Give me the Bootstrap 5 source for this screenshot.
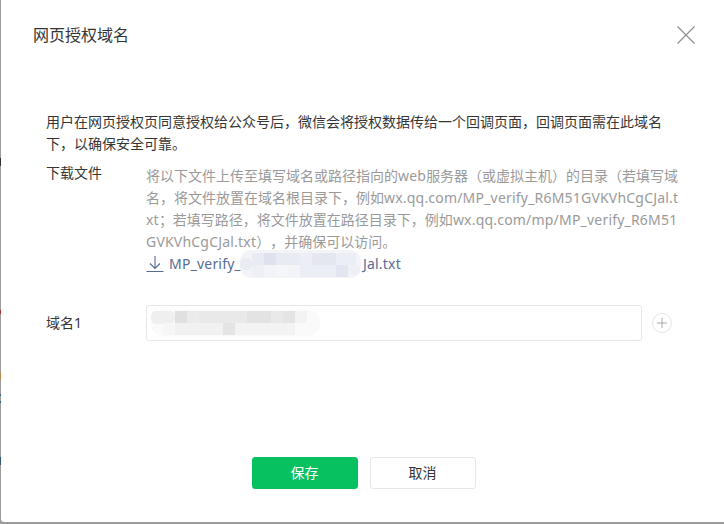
<!DOCTYPE html>
<html lang="zh-CN">
<head>
<meta charset="utf-8">
<title>网页授权域名</title>
<link href="https://cdn.jsdelivr.net/npm/bootstrap@5.3.0/dist/css/bootstrap.min.css" rel="stylesheet">
<style>
html,body{height:524px;overflow:hidden}
body{font-family:"Noto Sans","Noto Sans CJK SC",sans-serif;font-size:14px;line-height:22px;color:#353535;font-kerning:none;text-spacing-trim:space-all;font-feature-settings:"chws" 0,"halt" 0,"palt" 0;
 background:linear-gradient(#9b9b9b 0 158px,#333 158px 166px,#9b9b9b 166px 310px,#a33 310px 314px,#9b9b9b 314px 372px,#b98a4a 372px 380px,#9b9b9b 380px 394px,#36609e 394px 396px,#9b9b9b 396px 401px,#36609e 401px 403px,#9b9b9b 403px 457px,#357 457px 465px,#9b9b9b 465px)}
.dlg{height:522px;margin-left:1px;background:#fff;border-bottom-left-radius:3px}
.dlg-title{padding:24px 29px 0 32px;height:101px}
.dlg-title h1{font-size:16px;line-height:22px;font-weight:400;margin:0;color:#353535}
.dlg-close{width:18px;height:18px;margin-top:2px;padding:0;border:0;background:none;display:block}
.dlg-close svg{display:block}
.dlg-body{padding:10px 40px 0 45px}
.intro{width:630px;margin:0 0 7px}
.lbl{width:100px;flex:none}
.note{width:536px;color:#9a9a9a;margin-top:3px}
.note-line{display:block;white-space:nowrap}
.lat{letter-spacing:.2px}
.dl{color:#576b95;text-decoration:none;display:flex;align-items:center;height:22px;letter-spacing:.2px}
.dl-ico{margin-right:5px;flex:none}
.blur1{width:121px;height:28px;margin:0 2px 0 -1px;flex:none}
.domain-row{margin-top:30px;height:36px}
.fld{width:496px;height:36px;border:1px solid #e7e7eb;border-radius:3px;padding:4px}
.fld svg{display:block}
.plus{width:20px;height:20px;margin-left:10px;display:block;flex:none}
.dlg-foot{gap:12px;padding:0 0 33px 2px}
.btn-a,.btn-b{width:106px;height:32px;padding:0;font-size:14px;line-height:30px;border-radius:3px}
.btn-a{background:#07c160;border:1px solid #07c160;color:#fff}
.btn-b{background:#fff;border:1px solid #e7e7eb;color:#353535}
</style>
</head>
<body>
<div class="dlg d-flex flex-column">
  <div class="dlg-title d-flex justify-content-between align-items-start">
    <h1>网页授权域名</h1>
    <button class="dlg-close" aria-label="关闭"><svg width="18" height="18" viewBox="0 0 18 18"><path d="M.5.5l17 17M17.5.5l-17 17" stroke="#8c8c8c" stroke-width="1.1" fill="none"/></svg></button>
  </div>
  <div class="dlg-body">
    <p class="intro">用户在网页授权页同意授权给公众号后，微信会将授权数据传给一个回调页面，回调页面需在此域名下，以确保安全可靠。</p>
    <div class="d-flex">
      <div class="lbl">下载文件</div>
      <div>
        <div class="note">
          <span class="note-line"><span>将以下文件上传至填写域名或路径指向的</span><span class="lat">web</span><span>服务器（或虚拟主机）的目录（若填写域</span></span>
          <span class="note-line"><span>名，将文件放置在域名根目录下，例如</span><span class="lat">wx.qq.com/MP_verify_R6M51GVKVhCgCJal.t</span></span>
          <span class="note-line"><span class="lat">xt</span><span>；若填写路径，将文件放置在路径目录下，例如</span><span class="lat">wx.qq.com/mp/MP_verify_R6M51</span></span>
          <span class="note-line"><span class="lat">GVKVhCgCJal.txt</span><span>），并确保可以访问。</span></span>
        </div>
        <a class="dl" href="#"><svg class="dl-ico" width="18" height="18" viewBox="0 0 18 18"><path d="M9 1v12M4 8.5l5 5 5-5M.5 16.5h17" stroke="#576b95" stroke-width="1.1" fill="none"/></svg>MP_verify_<svg class="blur1" viewBox="0 0 121 28"><rect width="121" height="28" rx="11" fill="#f3f4f8"/><rect x="12" y="3" width="12" height="12" fill="#e9ebf3"/><rect x="24" y="3" width="12" height="12" fill="#dfe2ee"/><rect x="36" y="3" width="24" height="12" fill="#e9ebf3"/><rect x="60" y="3" width="12" height="12" fill="#edeef5"/><rect x="72" y="3" width="24" height="12" fill="#e4e6f0"/><rect x="96" y="3" width="20" height="12" fill="#eceef5"/><rect x="0" y="8" width="12" height="12" rx="5" fill="#eaecf4"/><rect x="12" y="15" width="12" height="12" fill="#eef0f6"/><rect x="36" y="15" width="12" height="12" fill="#f5f6fa"/><rect x="60" y="15" width="36" height="12" fill="#eceef5"/><rect x="96" y="15" width="12" height="12" fill="#e3e6f0"/><rect x="108" y="15" width="12" height="10" rx="4" fill="#eef0f6"/></svg>Jal.txt</a>
      </div>
    </div>
    <div class="domain-row d-flex align-items-center">
      <div class="lbl">域名1</div>
      <div class="fld"><svg width="170" height="26" viewBox="0 0 170 26"><rect width="169" height="26" rx="12" fill="#fafafa"/><rect x="0" y="1" width="24" height="13" rx="5" fill="#efefef"/><rect x="24" y="1" width="24" height="12" fill="#ebebeb"/><rect x="24" y="1" width="12" height="12" fill="#e0e0e0"/><rect x="48" y="1" width="24" height="12" fill="#f0f0f0"/><rect x="48" y="1" width="72" height="12" fill="#e9e9e9"/><rect x="96" y="1" width="24" height="12" fill="#e3e3e3"/><rect x="120" y="1" width="12" height="12" fill="#e9e9e9"/><rect x="144" y="1" width="12" height="12" fill="#f3f3f3"/><rect x="132" y="1" width="12" height="12" fill="#e4e4e4"/><rect x="12" y="13" width="12" height="12" fill="#f6f6f6"/><rect x="24" y="13" width="60" height="12" fill="#f1f1f1"/><rect x="72" y="13" width="12" height="12" fill="#e4e4e4"/><rect x="84" y="13" width="60" height="12" fill="#f3f3f3"/></svg></div>
      <svg class="plus" viewBox="0 0 20 20"><circle cx="10" cy="10" r="9.5" fill="none" stroke="#e4e4e6"/><path d="M10 5v10M5 10h10" stroke="#a8a8a8" fill="none"/></svg>
    </div>
  </div>
  <div class="dlg-foot d-flex justify-content-center mt-auto">
    <button class="btn btn-a">保存</button>
    <button class="btn btn-b">取消</button>
  </div>
</div>
</body>
</html>
